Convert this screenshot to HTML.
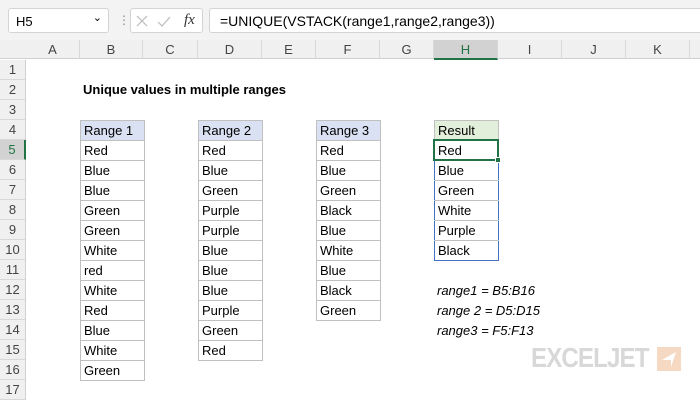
<!DOCTYPE html>
<html><head><meta charset="utf-8"><style>
*{margin:0;padding:0;box-sizing:border-box}
body{width:700px;height:400px;overflow:hidden;background:#fff;font-family:"Liberation Sans",sans-serif;position:relative;color:#000}
.top{position:absolute;left:0;top:0;width:700px;height:40px;background:#f3f3f3}
.nb{position:absolute;left:8px;top:8px;width:101px;height:25px;background:#fff;border:1px solid #d4d4d4;border-radius:3px;font-size:13px;padding:5px 0 0 7px}
.fb{position:absolute;left:209px;top:8px;width:500px;height:25px;background:#fff;border:1px solid #d4d4d4;border-radius:3px;font-size:14px;padding:4px 0 0 10px}
.ib{position:absolute;left:130px;top:8px;width:73px;height:25px;background:#fff;border:1px solid #d4d4d4;border-radius:3px}
.ch{position:absolute;top:40px;height:19px;background:#f0f0f0;border-bottom:1px solid #d0d0d0;}
.c{position:absolute;top:40px;height:19px;text-align:center;font-size:13px;line-height:19px;color:#444;border-right:1px solid #d8d8d8}
.r{position:absolute;left:0;width:26px;height:20px;text-align:center;font-size:13px;line-height:20px;color:#444;background:#f0f0f0;border-bottom:1px solid #d8d8d8;border-right:1px solid #d0d0d0}
table{position:absolute;border-collapse:collapse;font-size:13px}
td{height:20px;border:1px solid #c0c0c0;padding-left:3px;line-height:18px;width:64px}
.note{position:absolute;left:437px;font-size:13px;font-style:italic}
</style></head><body>
<div class="top"></div>
<div class="nb">H5<span style="position:absolute;right:6px;top:2px;font-size:11px">&#8964;</span></div>
<div style="position:absolute;left:118px;top:13px;color:#888;font-size:12px">&#8942;</div>
<div class="ib"><svg width="73" height="25" style="position:absolute;left:0;top:0"><path d="M6 7l10 10M16 7L6 17" stroke="#bbb" stroke-width="1.2"/><path d="M27 13l4 4 8-9" stroke="#bbb" stroke-width="1.2" fill="none"/></svg><span style="position:absolute;left:53px;top:3px;font-family:'Liberation Serif',serif;font-style:italic;font-size:15px;color:#333">fx</span></div>
<div class="fb">=UNIQUE(VSTACK(range1,range2,range3))</div>
<div class="ch" style="left:0;width:700px"></div>
<div class="c" style="left:26px;width:54px">A</div>
<div class="c" style="left:80px;width:63px">B</div>
<div class="c" style="left:143px;width:55px">C</div>
<div class="c" style="left:198px;width:64px">D</div>
<div class="c" style="left:262px;width:54px">E</div>
<div class="c" style="left:316px;width:64px">F</div>
<div class="c" style="left:380px;width:54px">G</div>
<div class="c" style="left:434px;width:64px;background:#d2d2d2;border-bottom:2px solid #217346;height:20px;color:#217346">H</div>
<div class="c" style="left:498px;width:64px">I</div>
<div class="c" style="left:562px;width:64px">J</div>
<div class="c" style="left:626px;width:64px">K</div>
<div class="r" style="top:60px">1</div><div class="r" style="top:80px">2</div><div class="r" style="top:100px">3</div><div class="r" style="top:120px">4</div>
<div class="r" style="top:140px;background:#d2d2d2;border-right:2px solid #217346;color:#217346">5</div>
<div class="r" style="top:160px">6</div><div class="r" style="top:180px">7</div><div class="r" style="top:200px">8</div><div class="r" style="top:220px">9</div><div class="r" style="top:240px">10</div><div class="r" style="top:260px">11</div><div class="r" style="top:280px">12</div><div class="r" style="top:300px">13</div><div class="r" style="top:320px">14</div><div class="r" style="top:340px">15</div><div class="r" style="top:360px">16</div><div class="r" style="top:380px">17</div>
<div style="position:absolute;left:83px;top:82px;font-size:13px;font-weight:bold">Unique values in multiple ranges</div>
<table style="left:80px;top:120px"><tr><td style="background:#d9e1f2">Range 1</td></tr><tr><td>Red</td></tr><tr><td>Blue</td></tr><tr><td>Blue</td></tr><tr><td>Green</td></tr><tr><td>Green</td></tr><tr><td>White</td></tr><tr><td>red</td></tr><tr><td>White</td></tr><tr><td>Red</td></tr><tr><td>Blue</td></tr><tr><td>White</td></tr><tr><td>Green</td></tr></table>
<table style="left:198px;top:120px"><tr><td style="background:#d9e1f2">Range 2</td></tr><tr><td>Red</td></tr><tr><td>Blue</td></tr><tr><td>Green</td></tr><tr><td>Purple</td></tr><tr><td>Purple</td></tr><tr><td>Blue</td></tr><tr><td>Blue</td></tr><tr><td>Blue</td></tr><tr><td>Purple</td></tr><tr><td>Green</td></tr><tr><td>Red</td></tr></table>
<table style="left:316px;top:120px"><tr><td style="background:#d9e1f2">Range 3</td></tr><tr><td>Red</td></tr><tr><td>Blue</td></tr><tr><td>Green</td></tr><tr><td>Black</td></tr><tr><td>Blue</td></tr><tr><td>White</td></tr><tr><td>Blue</td></tr><tr><td>Black</td></tr><tr><td>Green</td></tr></table>
<table style="left:434px;top:120px"><tr><td style="background:#e2efda">Result</td></tr><tr><td>Red</td></tr><tr><td style="border-left-color:#4472c4;border-right-color:#4472c4">Blue</td></tr><tr><td style="border-left-color:#4472c4;border-right-color:#4472c4">Green</td></tr><tr><td style="border-left-color:#4472c4;border-right-color:#4472c4">White</td></tr><tr><td style="border-left-color:#4472c4;border-right-color:#4472c4">Purple</td></tr><tr><td style="border-left-color:#4472c4;border-right-color:#4472c4;border-bottom-color:#4472c4">Black</td></tr></table>
<div style="position:absolute;left:433px;top:139px;width:66px;height:22px;border:2px solid #217346"></div>
<div style="position:absolute;left:495px;top:157px;width:6px;height:6px;background:#217346;border:1px solid #fff"></div>
<div class="note" style="top:283px">range1 = B5:B16</div>
<div class="note" style="top:303px">range 2 = D5:D15</div>
<div class="note" style="top:323px">range3 = F5:F13</div>
<div style="position:absolute;left:531px;top:342px;font-size:28px;font-weight:bold;color:#d8d8d8;letter-spacing:-1px;transform:scaleX(0.86);transform-origin:left top;white-space:nowrap">EXCELJET</div>
<div style="position:absolute;left:657px;top:347px;width:24px;height:24px;background:#f6d9c3"><svg width="24" height="24"><path d="M19 5L5 13l9 0 0 7z" fill="#fff"/></svg></div>
</body></html>
